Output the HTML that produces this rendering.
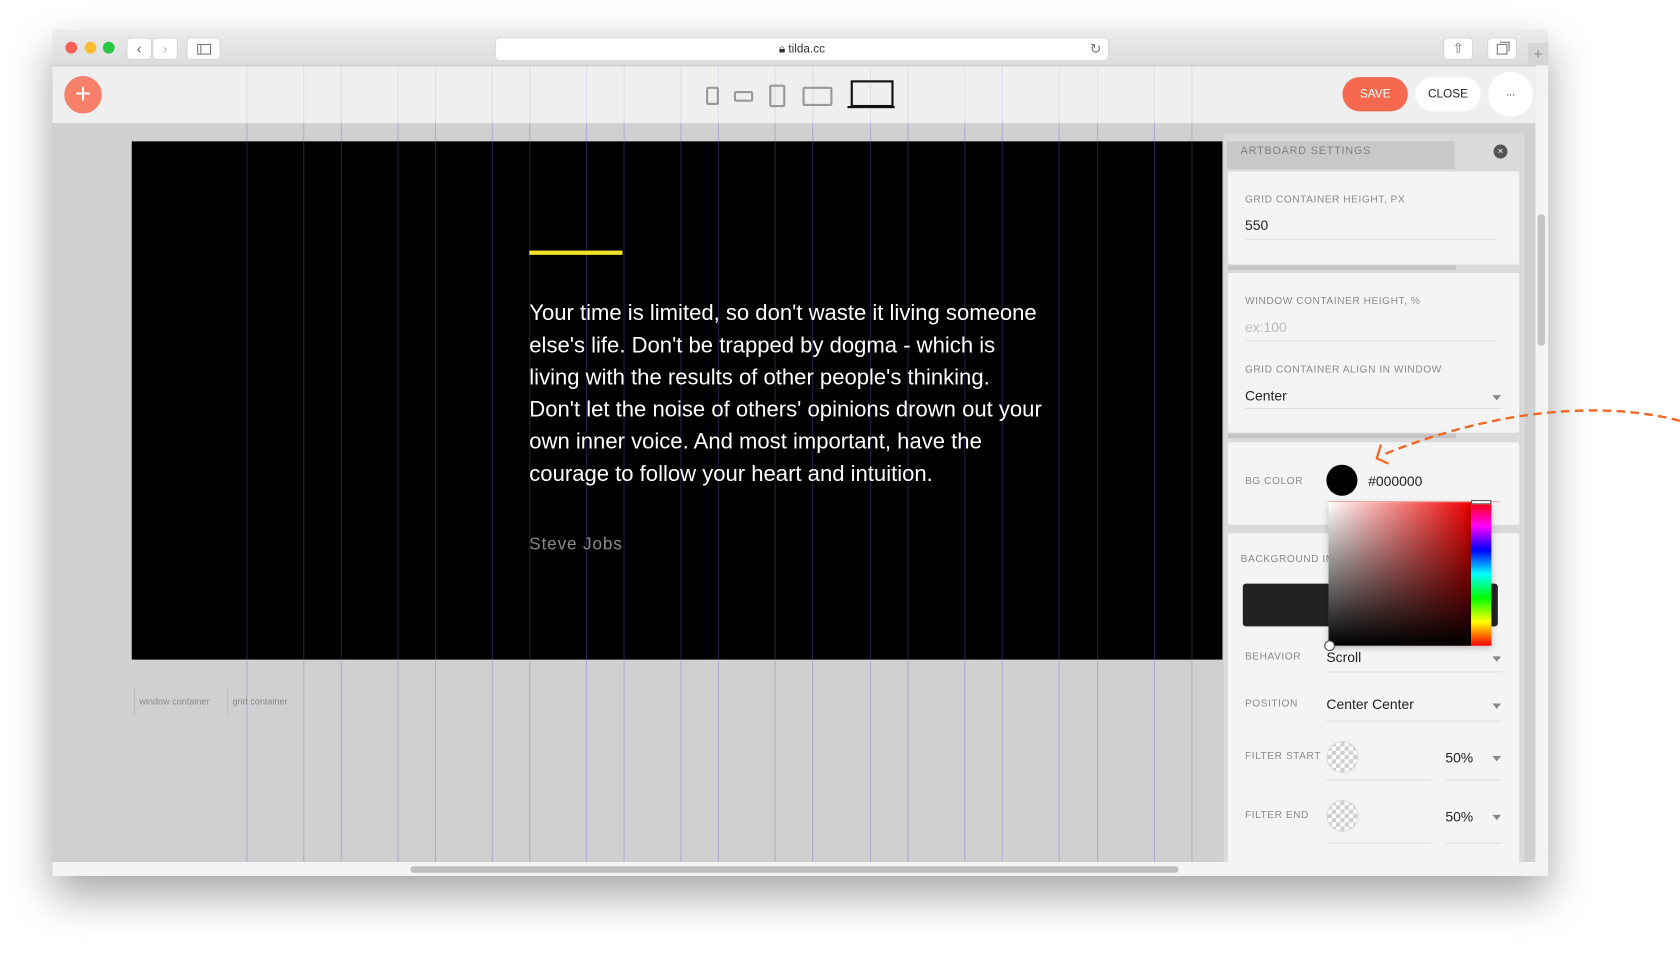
<!DOCTYPE html>
<html><head><meta charset="utf-8"><style>
html,body{margin:0;padding:0;width:1680px;height:953px;overflow:hidden;background:#fff;font-family:"Liberation Sans",sans-serif}
#s{position:absolute;left:0;top:0;width:1568px;height:890px;transform:scale(1.0714,1.0708);transform-origin:0 0}
.a{position:absolute}
.win{left:49px;top:28px;width:1396px;height:790px;background:#d0d0d0;border-radius:5px;box-shadow:0 18px 40px rgba(0,0,0,.35);overflow:hidden}
.tl{border-radius:50%;width:11px;height:11px;top:39px}
.btn{background:#fff;border:1px solid #d6d6d6;border-radius:4px;height:19px;top:35px}
.gl{width:1px;top:115px;height:690px;background:rgba(100,100,225,.32)}
.gt{width:1px;top:62px;height:53px;background:rgba(100,100,225,.12)}
.q{color:#fff;font-size:20.6px;left:494px;white-space:nowrap;line-height:30px}
.lbl{font-size:9.5px;color:#8a8a8a;letter-spacing:.5px;white-space:nowrap}
.val{font-size:13px;color:#222;white-space:nowrap}
.card{background:#f4f4f4;left:1146px;width:272px;border-radius:2px}
.line{height:1px;background:#e0e0e0}
.arr{width:0;height:0;border-left:4px solid transparent;border-right:4px solid transparent;border-top:5px solid #888}
.chk{width:28px;height:28px;border-radius:50%;border:1px solid #ddd;background-color:#fff;background-image:linear-gradient(45deg,#ccc 25%,transparent 25%,transparent 75%,#ccc 75%),linear-gradient(45deg,#ccc 25%,transparent 25%,transparent 75%,#ccc 75%);background-size:8px 8px;background-position:0 0,4px 4px}
</style></head><body><div id="s">
<div class="a win"></div>
<div class="a" style="left:49px;top:28px;width:1396px;height:33px;background:linear-gradient(#ebebeb,#dcdcdc);border-radius:5px 5px 0 0;border-bottom:1px solid #c6c6c6"></div>
<div class="a tl" style="left:61px;background:#fc5f57"></div>
<div class="a tl" style="left:79px;background:#fdbc2e"></div>
<div class="a tl" style="left:96px;background:#29c840"></div>
<div class="a btn" style="left:118px;width:22px;font-size:14px;color:#666;text-align:center;line-height:18px">&#8249;</div>
<div class="a btn" style="left:142px;width:22px;font-size:14px;color:#bbb;text-align:center;line-height:18px">&#8250;</div>
<div class="a btn" style="left:174px;width:30px"><div class="a" style="left:9px;top:5px;width:11px;height:8px;border:1px solid #777"></div><div class="a" style="left:12px;top:5px;width:1px;height:10px;background:#777"></div></div>
<div class="a" style="left:462px;top:35px;width:571px;height:20px;background:#fff;border-radius:4px;border:1px solid #dcdcdc;font-size:11px;color:#333;text-align:center;line-height:20px">&#128274;&#xFE0E; tilda.cc<span class="a" style="right:6px;top:0;color:#777;font-size:13px">&#8635;</span></div>
<div class="a btn" style="left:1347px;width:26px;color:#666;font-size:12px;text-align:center;line-height:18px">&#8679;</div>
<div class="a btn" style="left:1388px;width:26px"><div class="a" style="left:8px;top:5px;width:8px;height:8px;border:1px solid #777"></div><div class="a" style="left:11px;top:3px;width:8px;height:8px;border-top:1px solid #777;border-right:1px solid #777"></div></div>
<div class="a" style="left:1426px;top:40px;width:19px;height:21px;background:#d5d5d5;color:#888;font-size:14px;text-align:center;line-height:20px">+</div>
<div class="a" style="left:49px;top:62px;width:1384px;height:53px;background:#efefef"></div>
<div class="a" style="left:60px;top:71px;width:35px;height:35px;border-radius:50%;background:#f7806a;color:#fff;font-size:26px;text-align:center;line-height:33px;font-weight:300">+</div>
<div class="a" style="left:659px;top:81px;width:8px;height:13px;border:2px solid #999;border-radius:2px"></div>
<div class="a" style="left:685px;top:85px;width:14px;height:6px;border:2px solid #999;border-radius:2px"></div>
<div class="a" style="left:718px;top:79px;width:11px;height:17px;border:2px solid #999;border-radius:2px"></div>
<div class="a" style="left:749px;top:81px;width:24px;height:14px;border:2px solid #999;border-radius:2px"></div>
<div class="a" style="left:794px;top:75px;width:36px;height:21px;border:2px solid #111"></div>
<div class="a" style="left:791px;top:99px;width:44px;height:2px;background:#111"></div>
<div class="a" style="left:1253px;top:72px;width:61px;height:32px;border-radius:16px;background:#f4694f;color:#fff;font-size:11px;text-align:center;line-height:32px">SAVE</div>
<div class="a" style="left:1321px;top:72px;width:61px;height:32px;border-radius:16px;background:#fff;color:#222;font-size:11px;text-align:center;line-height:32px">CLOSE</div>
<div class="a" style="left:1389px;top:67px;width:42px;height:42px;border-radius:50%;background:#fff;color:#333;font-size:10px;text-align:center;line-height:40px">...</div>
<div class="a" style="left:123px;top:132px;width:1018px;height:484px;background:#000"></div>
<div class="a gl" style="left:230px"></div><div class="a gl" style="left:283px"></div><div class="a gl" style="left:318px"></div><div class="a gl" style="left:371px"></div><div class="a gl" style="left:406px"></div><div class="a gl" style="left:459px"></div><div class="a gl" style="left:494px"></div><div class="a gl" style="left:547px"></div><div class="a gl" style="left:582px"></div><div class="a gl" style="left:635px"></div><div class="a gl" style="left:670px"></div><div class="a gl" style="left:723px"></div><div class="a gl" style="left:758px"></div><div class="a gl" style="left:812px"></div><div class="a gl" style="left:847px"></div><div class="a gl" style="left:900px"></div><div class="a gl" style="left:935px"></div><div class="a gl" style="left:988px"></div><div class="a gl" style="left:1024px"></div><div class="a gl" style="left:1077px"></div><div class="a gl" style="left:1112px"></div>
<div class="a gt" style="left:230px"></div><div class="a gt" style="left:283px"></div><div class="a gt" style="left:318px"></div><div class="a gt" style="left:371px"></div><div class="a gt" style="left:406px"></div><div class="a gt" style="left:459px"></div><div class="a gt" style="left:494px"></div><div class="a gt" style="left:547px"></div><div class="a gt" style="left:582px"></div><div class="a gt" style="left:635px"></div><div class="a gt" style="left:670px"></div><div class="a gt" style="left:723px"></div><div class="a gt" style="left:758px"></div><div class="a gt" style="left:812px"></div><div class="a gt" style="left:847px"></div><div class="a gt" style="left:900px"></div><div class="a gt" style="left:935px"></div><div class="a gt" style="left:988px"></div><div class="a gt" style="left:1024px"></div><div class="a gt" style="left:1077px"></div><div class="a gt" style="left:1112px"></div>
<div class="a" style="left:494px;top:234px;width:87px;height:4px;background:#f3e42a"></div>
<div class="a q" style="top:278px">Your time is limited, so don't waste it living someone</div>
<div class="a q" style="top:308px">else's life. Don't be trapped by dogma - which is</div>
<div class="a q" style="top:338px">living with the results of other people's thinking.</div>
<div class="a q" style="top:368px">Don't let the noise of others' opinions drown out your</div>
<div class="a q" style="top:398px">own inner voice. And most important, have the</div>
<div class="a q" style="top:428px">courage to follow your heart and intuition.</div>
<div class="a" style="left:494px;top:500px;font-size:16px;color:#8a8a8a;letter-spacing:.8px">Steve Jobs</div>
<div class="a" style="left:125px;top:643px;height:24px;border-left:1px solid #bbb;padding-left:4px;font-size:8.5px;color:#888;line-height:24px">window container</div>
<div class="a" style="left:212px;top:643px;height:24px;border-left:1px solid #bbb;padding-left:4px;font-size:8.5px;color:#888;line-height:24px">grid container</div>
<div class="a" style="left:49px;top:805px;width:1384px;height:13px;background:#f4f4f4"></div>
<div class="a" style="left:383px;top:809px;width:717px;height:6px;border-radius:3px;background:#bdbdbd"></div>
<div class="a" style="left:1433px;top:61px;width:12px;height:757px;background:#f4f4f4"></div>
<div class="a" style="left:1435px;top:200px;width:7px;height:123px;border-radius:4px;background:#c4c4c4"></div>
<div class="a" style="left:1142px;top:125px;width:281px;height:680px;background:#dadada;border-radius:3px 3px 0 0"></div>
<div class="a" style="left:1145px;top:132px;width:213px;height:26px;background:#c8c8c8"></div>
<div class="a lbl" style="left:1158px;top:136px;color:#7f7f7f;font-size:10px;letter-spacing:.8px">ARTBOARD SETTINGS</div>
<div class="a" style="left:1394px;top:135px;width:13px;height:13px;border-radius:50%;background:#555;color:#fff;font-size:9px;text-align:center;line-height:13px">&#215;</div>
<div class="a card" style="top:160px;height:87px"></div>
<div class="a" style="left:1146px;top:248px;width:213px;height:4px;background:#c4c4c4"></div>
<div class="a lbl" style="left:1162px;top:181px">GRID CONTAINER HEIGHT, PX</div>
<div class="a val" style="left:1162px;top:203px">550</div>
<div class="a line" style="left:1162px;top:223px;width:234px"></div>
<div class="a card" style="top:255px;height:149px"></div>
<div class="a" style="left:1146px;top:405px;width:213px;height:4px;background:#c4c4c4"></div>
<div class="a lbl" style="left:1162px;top:276px">WINDOW CONTAINER HEIGHT, %</div>
<div class="a val" style="left:1162px;top:298px;color:#bbb">ex:100</div>
<div class="a line" style="left:1162px;top:318px;width:234px"></div>
<div class="a lbl" style="left:1162px;top:340px">GRID CONTAINER ALIGN IN WINDOW</div>
<div class="a val" style="left:1162px;top:362px">Center</div>
<div class="a arr" style="left:1393px;top:369px"></div>
<div class="a line" style="left:1162px;top:381px;width:240px"></div>
<div class="a card" style="top:413px;height:77px"></div>
<div class="a lbl" style="left:1162px;top:444px">BG COLOR</div>
<div class="a" style="left:1238px;top:434px;width:29px;height:29px;border-radius:50%;background:#000"></div>
<div class="a val" style="left:1277px;top:442px">#000000</div>
<div class="a card" style="top:498px;height:307px"></div>
<div class="a lbl" style="left:1158px;top:517px">BACKGROUND IMAGE</div>
<div class="a" style="left:1160px;top:545px;width:238px;height:40px;border-radius:3px;background:#222"></div>
<div class="a lbl" style="left:1162px;top:608px">BEHAVIOR</div>
<div class="a val" style="left:1238px;top:606px">Scroll</div>
<div class="a arr" style="left:1393px;top:613px"></div>
<div class="a line" style="left:1238px;top:627px;width:164px"></div>
<div class="a lbl" style="left:1162px;top:652px">POSITION</div>
<div class="a val" style="left:1238px;top:650px">Center Center</div>
<div class="a arr" style="left:1393px;top:657px"></div>
<div class="a line" style="left:1238px;top:673px;width:164px"></div>
<div class="a lbl" style="left:1162px;top:701px">FILTER START</div>
<div class="a chk" style="left:1238px;top:692px"></div>
<div class="a val" style="left:1349px;top:700px">50%</div>
<div class="a arr" style="left:1393px;top:706px"></div>
<div class="a line" style="left:1238px;top:728px;width:98px"></div><div class="a line" style="left:1349px;top:728px;width:53px"></div>
<div class="a lbl" style="left:1162px;top:756px">FILTER END</div>
<div class="a chk" style="left:1238px;top:747px"></div>
<div class="a val" style="left:1349px;top:755px">50%</div>
<div class="a arr" style="left:1393px;top:761px"></div>
<div class="a line" style="left:1238px;top:787px;width:98px"></div><div class="a line" style="left:1349px;top:787px;width:53px"></div>
<div class="a" style="left:1240px;top:468px;width:160px;height:1px;background:#f2a8a0"></div>
<div class="a" style="left:1240px;top:469px;width:133px;height:134px;background:linear-gradient(to top,#000,transparent),linear-gradient(to right,#fff,#e00);box-shadow:0 2px 6px rgba(0,0,0,.25)"></div>
<div class="a" style="left:1373px;top:469px;width:19px;height:134px;background:linear-gradient(to bottom,#f00,#f0f,#00f,#0ff,#0f0,#ff0,#f00);box-shadow:0 2px 6px rgba(0,0,0,.25)"></div>
<div class="a" style="left:1373px;top:467px;width:17px;height:2px;border:1px solid #555;background:#fff"></div>
<div class="a" style="left:1236px;top:598px;width:8px;height:8px;border-radius:50%;border:1.5px solid #444;background:#fff"></div>
<svg class="a" style="left:1270px;top:375px" width="298" height="70" viewBox="0 0 298 70"><path d="M298 18 C230 0 130 5 20 50" fill="none" stroke="#f26522" stroke-width="2.2" stroke-dasharray="8 5"/><path d="M19 40 L15 53 L26 58" fill="none" stroke="#f26522" stroke-width="2"/></svg>
</div></body></html>
